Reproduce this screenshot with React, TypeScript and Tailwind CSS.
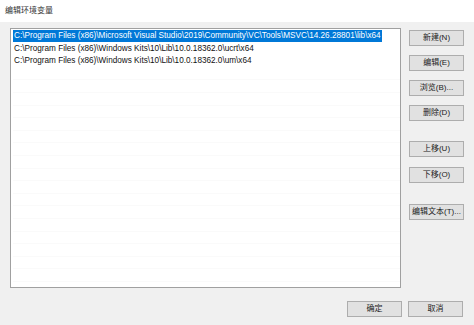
const paths = [
  'C:\\Program Files (x86)\\Microsoft Visual Studio\\2019\\Community\\VC\\Tools\\MSVC\\14.26.28801\\lib\\x64',
  'C:\\Program Files (x86)\\Windows Kits\\10\\Lib\\10.0.18362.0\\ucrt\\x64',
  'C:\\Program Files (x86)\\Windows Kits\\10\\Lib\\10.0.18362.0\\um\\x64',
];

const sideButtons = [
  { label: '新建(N)', gap: 'mt-0' },
  { label: '编辑(E)', gap: 'mt-[9px]' },
  { label: '浏览(B)...', gap: 'mt-[9px]' },
  { label: '删除(D)', gap: 'mt-[9px]' },
  { label: '上移(U)', gap: 'mt-[20px]' },
  { label: '下移(O)', gap: 'mt-[10px]' },
  { label: '编辑文本(T)...', gap: 'mt-[21px]' },
];

function Btn({ label, className = '' }: { label: string; className?: string }) {
  return (
    <div
      className={`h-[16px] w-[55px] flex items-center justify-center bg-[#e1e1e1] border border-[#adadad] text-[8px] text-[#222] ${className}`}
    >
      {label}
    </div>
  );
}

export default function App() {
  return (
    <div
      className="w-[474px] h-[325px] bg-[#f0f0f0] flex flex-col overflow-hidden"
      style={{ fontFamily: '"Liberation Sans", "Noto Sans CJK SC", sans-serif' }}
    >
      {/* title bar */}
      <div className="h-[22px] bg-white flex items-center pl-[5px] text-[8px] text-[#333]">编辑环境变量</div>

      <div className="flex pt-[6px] pl-[10px]">
        {/* list */}
        <div className="w-[391px] h-[260px] bg-white border border-[#a0a0a0] pt-[1px] pl-[2px] overflow-hidden">
          {paths.map((p, i) => (
            <div key={i} className="h-[12.6px] flex items-center">
              <span
                className={`px-[1px] leading-[12px] text-[8.2px] whitespace-nowrap ${
                  i === 0 ? 'bg-[#0078d7] text-white' : 'text-[#111]'
                }`}
              >
                {p}
              </span>
            </div>
          ))}
          {Array.from({ length: 18 }).map((_, i) => (
            <div key={i} className="h-[12.6px] border-b border-[#fafafa]" />
          ))}
        </div>

        {/* side buttons */}
        <div className="ml-[8px] pt-[2px] flex flex-col">
          {sideButtons.map((b) => (
            <Btn key={b.label} label={b.label} className={b.gap} />
          ))}
        </div>
      </div>

      {/* bottom buttons */}
      <div className="flex justify-end gap-[6px] pr-[11px] mt-[13px]">
        <Btn label="确定" className="border-[#0078d7] border-[1.5px]" />
        <Btn label="取消" />
      </div>
    </div>
  );
}
